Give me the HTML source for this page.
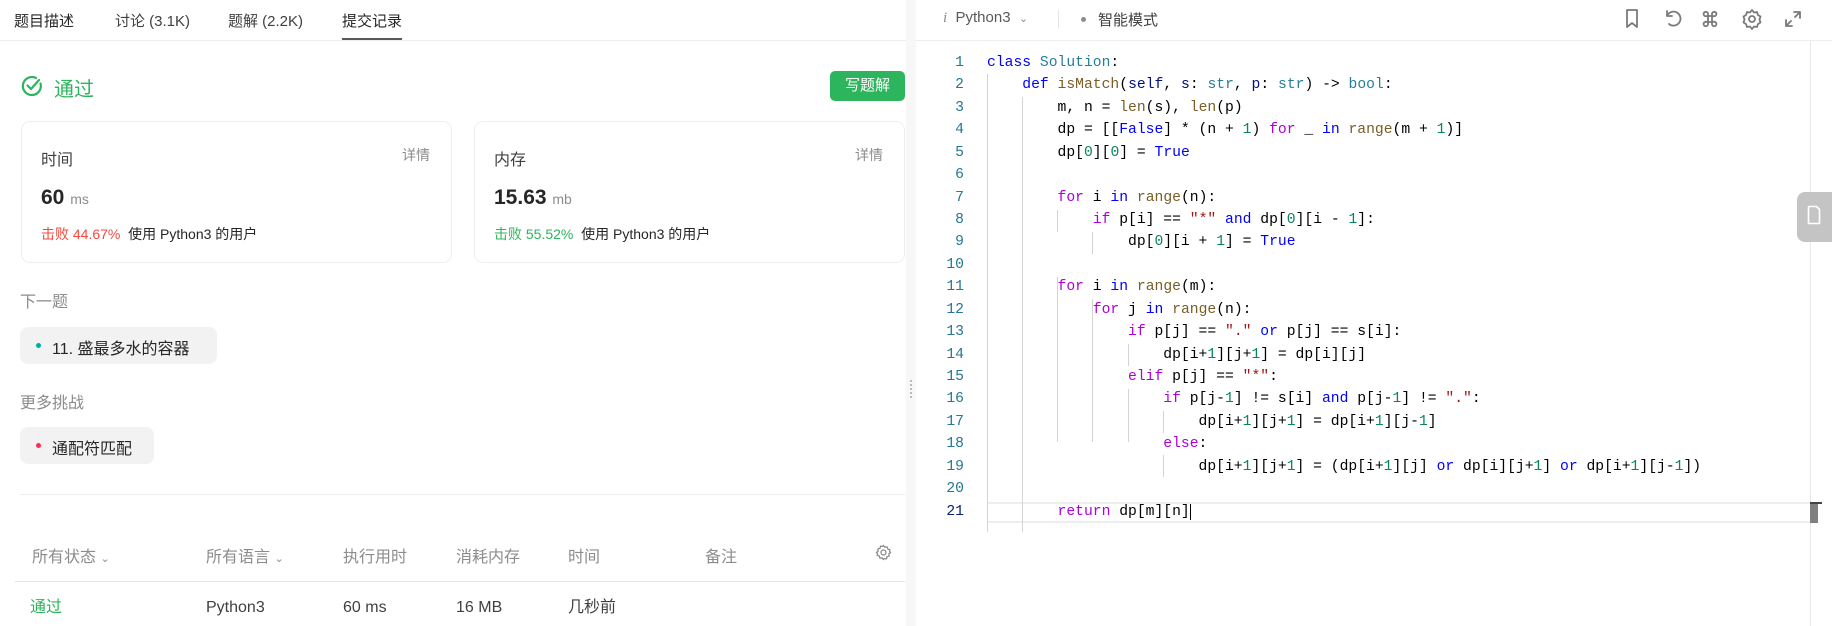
<!DOCTYPE html>
<html><head><meta charset="utf-8">
<style>
*{margin:0;padding:0;box-sizing:border-box}
body{width:1832px;height:626px;overflow:hidden;background:#fff;font-family:"Liberation Sans","Noto Sans CJK SC",sans-serif;position:relative;color:#262626}
.a{position:absolute;white-space:nowrap}
.code{font-family:"Liberation Mono",monospace;font-size:14.7px;line-height:22.45px}
.k{color:#0000ff}.c{color:#af00db}.f{color:#795e26}.n{color:#098658}.s{color:#a31515}.t{color:#267f99}.v{color:#001080}
.ln{position:absolute;left:916px;width:48px;text-align:right;color:#237893}
.cl{position:absolute;left:987px;color:#000;white-space:pre}
.g{position:absolute;width:1px;background:#d3d3d3}
</style></head><body>
<div class="a" style="left:14px;top:10px;font-size:15px;color:#262626">题目描述</div>
<div class="a" style="left:115px;top:10px;font-size:15px;color:#404040">讨论 (3.1K)</div>
<div class="a" style="left:228px;top:10px;font-size:15px;color:#404040">题解 (2.2K)</div>
<div class="a" style="left:342px;top:10px;font-size:15px;color:#262626">提交记录</div>
<div class="a" style="left:342px;top:38px;width:60px;height:3px;background:#595959"></div>
<div class="a" style="left:0;top:40px;width:906px;height:1px;background:#eee"></div>
<svg class="a" style="left:21px;top:75px" width="22" height="22" viewBox="0 0 22 22"><path d="M19.5 8.5A9 9 0 1 1 15 3" fill="none" stroke="#2cb55d" stroke-width="2.2" stroke-linecap="round"/><path d="M6.5 10.5l3.5 3.5 8-9" fill="none" stroke="#2cb55d" stroke-width="2.2" stroke-linecap="round" stroke-linejoin="round"/></svg>
<div class="a" style="left:54px;top:73px;font-size:20px;color:#2cb55d">通过</div>
<div class="a" style="left:830px;top:71px;width:75px;height:30px;background:#2db55d;border-radius:5px;color:#fff;font-size:15px;text-align:center;line-height:30px">写题解</div>
<div class="a" style="left:21px;top:121px;width:431px;height:142px;border:1px solid #eee;border-radius:9px"></div>
<div class="a" style="left:474px;top:121px;width:431px;height:142px;border:1px solid #eee;border-radius:9px"></div>
<div class="a" style="left:41px;top:146px;font-size:16px;color:#404040">时间</div>
<div class="a" style="left:402px;top:145px;font-size:14px;color:#8c8c8c">详情</div>
<div class="a" style="left:41px;top:186px;font-size:21px;color:#262626;font-weight:bold">60 <span style="font-size:14px;font-weight:normal;color:#8c8c8c">ms</span></div>
<div class="a" style="left:41px;top:224px;font-size:14px;color:#262626"><span style="color:#f5493d">击败 44.67%</span>&nbsp; 使用 Python3 的用户</div>
<div class="a" style="left:494px;top:146px;font-size:16px;color:#404040">内存</div>
<div class="a" style="left:855px;top:145px;font-size:14px;color:#8c8c8c">详情</div>
<div class="a" style="left:494px;top:186px;font-size:21px;color:#262626;font-weight:bold">15.63 <span style="font-size:14px;font-weight:normal;color:#8c8c8c">mb</span></div>
<div class="a" style="left:494px;top:224px;font-size:14px;color:#262626"><span style="color:#2cb55d">击败 55.52%</span>&nbsp; 使用 Python3 的用户</div>
<div class="a" style="left:20px;top:288px;font-size:16px;color:#8c8c8c">下一题</div>
<div class="a" style="left:20px;top:327px;width:197px;height:37px;background:#f2f2f2;border-radius:8px"></div>
<div class="a" style="left:36px;top:343px;width:5px;height:5px;border-radius:50%;background:#00af9b"></div>
<div class="a" style="left:52px;top:335px;font-size:16px;color:#262626">11. 盛最多水的容器</div>
<div class="a" style="left:20px;top:389px;font-size:16px;color:#8c8c8c">更多挑战</div>
<div class="a" style="left:20px;top:427px;width:134px;height:37px;background:#f2f2f2;border-radius:8px"></div>
<div class="a" style="left:36px;top:443px;width:5px;height:5px;border-radius:50%;background:#ff2d55"></div>
<div class="a" style="left:52px;top:435px;font-size:16px;color:#262626">通配符匹配</div>
<div class="a" style="left:20px;top:494px;width:885px;height:1px;background:#eee"></div>
<div class="a" style="left:32px;top:543px;font-size:16px;color:#8c8c8c">所有状态 <span style="font-size:11px">&#8964;</span></div>
<div class="a" style="left:206px;top:543px;font-size:16px;color:#8c8c8c">所有语言 <span style="font-size:11px">&#8964;</span></div>
<div class="a" style="left:343px;top:543px;font-size:16px;color:#8c8c8c">执行用时</div>
<div class="a" style="left:456px;top:543px;font-size:16px;color:#8c8c8c">消耗内存</div>
<div class="a" style="left:568px;top:543px;font-size:16px;color:#8c8c8c">时间</div>
<div class="a" style="left:705px;top:543px;font-size:16px;color:#8c8c8c">备注</div>
<svg class="a" style="left:875px;top:544px" width="17" height="17" viewBox="0 0 24 24"><path d="M12 2l2 2.5 3-.5 1 3 3 1-.5 3L22 12l-2.5 2 .5 3-3 1-1 3-3-.5L12 22l-2-2.5-3 .5-1-3-3-1 .5-3L2 12l2.5-2-.5-3 3-1 1-3 3 .5z" fill="none" stroke="#8c8c8c" stroke-width="1.8" stroke-linejoin="round"/><circle cx="12" cy="12" r="3.5" fill="none" stroke="#8c8c8c" stroke-width="1.8"/></svg>
<div class="a" style="left:15px;top:581px;width:890px;height:1px;background:#e5e5e5"></div>
<div class="a" style="left:30px;top:598px;font-size:16px;color:#2cb55d;line-height:20px">通过</div>
<div class="a" style="left:206px;top:598px;font-size:16px;color:#404040;line-height:20px">Python3</div>
<div class="a" style="left:343px;top:598px;font-size:16px;color:#404040;line-height:20px">60 ms</div>
<div class="a" style="left:456px;top:598px;font-size:16px;color:#404040;line-height:20px">16 MB</div>
<div class="a" style="left:568px;top:598px;font-size:16px;color:#404040;line-height:20px">几秒前</div>
<div class="a" style="left:906px;top:0;width:10px;height:626px;background:#f7f7f7"></div>
<div class="a" style="left:910px;top:380px;width:2px;height:18px;border-left:2px dotted #bbb"></div>
<div class="a" style="left:943px;top:9px;font-size:15px;color:#595959"><i style="color:#8c8c8c;font-family:'Liberation Serif',serif">i</i> &nbsp;Python3 &nbsp;<span style="font-size:11px;color:#8c8c8c">&#8964;</span></div>
<div class="a" style="left:1058px;top:10px;width:1px;height:18px;background:#e5e5e5"></div>
<div class="a" style="left:1081px;top:17px;width:5px;height:5px;border-radius:50%;background:#8c8c8c"></div>
<div class="a" style="left:1098px;top:9px;font-size:15px;color:#404040">智能模式</div>
<svg class="a" style="left:1620px;top:6px" width="200" height="26" viewBox="0 0 200 26" fill="none" stroke="#7a7a7a" stroke-width="1.8" stroke-linecap="round" stroke-linejoin="round">
<path d="M7 4h10v17l-5-4-5 4z"/>
<path d="M47 10a7 7 0 1 1 2 8M47 5v5h5"/>
<path d="M88 10h4v6h-4zM88 10V8a2.2 2.2 0 1 0-2.2 2.2H88M92 10V8a2.2 2.2 0 1 1 2.2 2.2H92M88 16v2a2.2 2.2 0 1 1-2.2-2.2H88M92 16v2a2.2 2.2 0 1 0 2.2-2.2H92"/>
<path d="M132 4l2 2.5 3-.5 1 3 2.5 1.5-1 3 1 3-2.5 1.5-1 3-3-.5-2 2.5-2-2.5-3 .5-1-3-2.5-1.5 1-3-1-3 2.5-1.5 1-3 3 .5z"/><circle cx="132" cy="13" r="3"/>
<path d="M174 6h6v6M180 6l-5 5M166 14v6h6M166 20l5-5"/>
</svg>
<div class="a" style="left:916px;top:40px;width:916px;height:1px;background:#eee"></div>
<div class="a" style="left:1810px;top:41px;width:1px;height:585px;background:#e8e8e8"></div>
<div class="a" style="left:987px;top:502px;width:823px;height:21px;border-top:2px solid #eee;border-bottom:2px solid #eee"></div>
<div class="a" style="left:1810px;top:502px;width:8px;height:21px;background:#808080"></div>
<div class="a" style="left:1810px;top:502px;width:12px;height:2px;background:#444"></div>
<div class="a" style="left:1797px;top:192px;width:35px;height:50px;background:#c4c4c4;border-radius:8px 0 0 8px"></div>
<svg class="a" style="left:1807px;top:205px" width="14" height="20" viewBox="0 0 14 20"><path d="M1.5 1.5h8l3 3v14h-11z" fill="none" stroke="#fff" stroke-width="1.6" stroke-linejoin="round"/></svg>
<div class="g" style="left:987px;top:74px;height:458px"></div>
<div class="g" style="left:1022px;top:97px;height:435px"></div>
<div class="g" style="left:1057px;top:210px;height:22px"></div>
<div class="g" style="left:1057px;top:277px;height:165px"></div>
<div class="g" style="left:1092px;top:232px;height:22px"></div>
<div class="g" style="left:1092px;top:299px;height:143px"></div>
<div class="g" style="left:1128px;top:344px;height:22px"></div>
<div class="g" style="left:1128px;top:389px;height:53px"></div>
<div class="g" style="left:1163px;top:411px;height:22px"></div>
<div class="g" style="left:1163px;top:455px;height:22px"></div>
<div class="code">
<div class="ln" style="top:52px">1</div><div class="cl" style="top:52px"><span class="k">class</span> <span class="t">Solution</span>:</div>
<div class="ln" style="top:74px">2</div><div class="cl" style="top:74px">    <span class="k">def</span> <span class="f">isMatch</span>(<span class="v">self</span>, <span class="v">s</span>: <span class="t">str</span>, <span class="v">p</span>: <span class="t">str</span>) -&gt; <span class="t">bool</span>:</div>
<div class="ln" style="top:97px">3</div><div class="cl" style="top:97px">        m, n = <span class="f">len</span>(s), <span class="f">len</span>(p)</div>
<div class="ln" style="top:119px">4</div><div class="cl" style="top:119px">        dp = [[<span class="k">False</span>] * (n + <span class="n">1</span>) <span class="c">for</span> _ <span class="k">in</span> <span class="f">range</span>(m + <span class="n">1</span>)]</div>
<div class="ln" style="top:142px">5</div><div class="cl" style="top:142px">        dp[<span class="n">0</span>][<span class="n">0</span>] = <span class="k">True</span></div>
<div class="ln" style="top:164px">6</div>
<div class="ln" style="top:187px">7</div><div class="cl" style="top:187px">        <span class="c">for</span> i <span class="k">in</span> <span class="f">range</span>(n):</div>
<div class="ln" style="top:209px">8</div><div class="cl" style="top:209px">            <span class="c">if</span> p[i] == <span class="s">"*"</span> <span class="k">and</span> dp[<span class="n">0</span>][i - <span class="n">1</span>]:</div>
<div class="ln" style="top:231px">9</div><div class="cl" style="top:231px">                dp[<span class="n">0</span>][i + <span class="n">1</span>] = <span class="k">True</span></div>
<div class="ln" style="top:254px">10</div>
<div class="ln" style="top:276px">11</div><div class="cl" style="top:276px">        <span class="c">for</span> i <span class="k">in</span> <span class="f">range</span>(m):</div>
<div class="ln" style="top:299px">12</div><div class="cl" style="top:299px">            <span class="c">for</span> j <span class="k">in</span> <span class="f">range</span>(n):</div>
<div class="ln" style="top:321px">13</div><div class="cl" style="top:321px">                <span class="c">if</span> p[j] == <span class="s">"."</span> <span class="k">or</span> p[j] == s[i]:</div>
<div class="ln" style="top:344px">14</div><div class="cl" style="top:344px">                    dp[i+<span class="n">1</span>][j+<span class="n">1</span>] = dp[i][j]</div>
<div class="ln" style="top:366px">15</div><div class="cl" style="top:366px">                <span class="c">elif</span> p[j] == <span class="s">"*"</span>:</div>
<div class="ln" style="top:388px">16</div><div class="cl" style="top:388px">                    <span class="c">if</span> p[j-<span class="n">1</span>] != s[i] <span class="k">and</span> p[j-<span class="n">1</span>] != <span class="s">"."</span>:</div>
<div class="ln" style="top:411px">17</div><div class="cl" style="top:411px">                        dp[i+<span class="n">1</span>][j+<span class="n">1</span>] = dp[i+<span class="n">1</span>][j-<span class="n">1</span>]</div>
<div class="ln" style="top:433px">18</div><div class="cl" style="top:433px">                    <span class="c">else</span>:</div>
<div class="ln" style="top:456px">19</div><div class="cl" style="top:456px">                        dp[i+<span class="n">1</span>][j+<span class="n">1</span>] = (dp[i+<span class="n">1</span>][j] <span class="k">or</span> dp[i][j+<span class="n">1</span>] <span class="k">or</span> dp[i+<span class="n">1</span>][j-<span class="n">1</span>])</div>
<div class="ln" style="top:478px">20</div>
<div class="ln" style="top:501px;color:#0b216f">21</div><div class="cl" style="top:501px">        <span class="c">return</span> dp[m][n]<span style="border-left:1.5px solid #000"></span></div>
</div>
</body></html>
